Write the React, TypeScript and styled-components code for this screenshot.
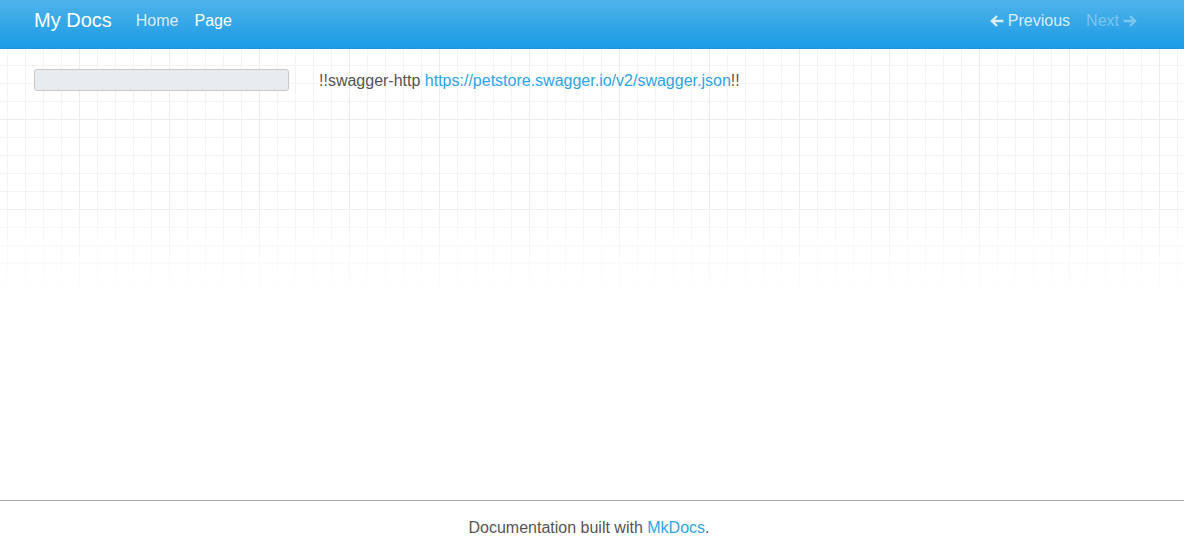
import React from 'react'
import styled, { createGlobalStyle } from 'styled-components'

const GlobalStyle = createGlobalStyle`
  html, body {
    margin: 0;
    padding: 0;
    background: #fff;
  }
  body {
    font-family: "Liberation Sans", Arial, Helvetica, sans-serif;
    font-size: 16px;
    color: #555;
  }
  a {
    color: #2fa4e7;
    text-decoration: none;
  }
`

const Page = styled.div`
  position: relative;
  min-height: 553px;
  display: flex;
  flex-direction: column;
  background-image:
    linear-gradient(to bottom, rgba(255, 255, 255, 0) 0px, rgba(255, 255, 255, 0) 190px, #fff 300px),
    linear-gradient(to right, #ececec 1px, transparent 1px),
    linear-gradient(to bottom, #ececec 1px, transparent 1px),
    linear-gradient(to right, #f3f3f3 1px, transparent 1px),
    linear-gradient(to bottom, #f3f3f3 1px, transparent 1px);
  background-size: 100% 100%, 90px 90px, 90px 90px, 18px 18px, 18px 18px;
  background-position: 0 0, 79px 29px, 79px 29px, 7px 11px, 7px 11px;
  background-repeat: no-repeat, repeat, repeat, repeat, repeat;
`

const Navbar = styled.nav`
  height: 49px;
  box-sizing: border-box;
  display: flex;
  align-items: center;
  padding: 0 47px 7px 34px;
  background: linear-gradient(#4fb3ea, #2fa4e7 60%, #1d9ce5);
  border-bottom: 1px solid #1b95dc;
`

const Brand = styled.a`
  color: #fff;
  font-size: 20px;
  margin-right: 24px;
`

const NavLink = styled.a<{ $active?: boolean; $disabled?: boolean }>`
  display: flex;
  align-items: center;
  gap: 4px;
  font-size: 16px;
  margin-right: 16px;
  color: ${(p) => (p.$disabled ? 'rgba(255,255,255,0.35)' : p.$active ? '#fff' : 'rgba(255,255,255,0.82)')};
  &:last-child {
    margin-right: 0;
  }
`

const Arrow = styled.svg`
  width: 14px;
  height: 14px;
  fill: currentColor;
`

const NavGroup = styled.div`
  display: flex;
  align-items: center;
`

const Spacer = styled.div`
  flex: 1;
`

const Main = styled.div`
  flex: 1;
  display: grid;
  grid-template-columns: 255px 1fr;
  gap: 30px;
  padding: 20px 34px 0;
  align-items: start;
`

const Toc = styled.div`
  height: 20px;
  background: #e9ecef;
  border: 1px solid #c8c8c8;
  border-radius: 3px;
`

const Content = styled.div`
  line-height: 22px;
  padding-top: 1px;
  color: #555;
`

const Footer = styled.footer`
  border-top: 1px solid #aaa;
  height: 53px;
  box-sizing: border-box;
  padding: 2px 6px 0 0;
  display: flex;
  align-items: center;
  justify-content: center;
  color: #555;
`

const LeftArrow = () => (
  <Arrow viewBox="0 0 14 14">
    <path d="M6.2 1.2 L7.8 2.8 L4.9 5.7 H13.4 V8.3 H4.9 L7.8 11.2 L6.2 12.8 L0.2 7 Z" />
  </Arrow>
)

const RightArrow = () => (
  <Arrow viewBox="0 0 14 14">
    <path d="M7.8 1.2 L6.2 2.8 L9.1 5.7 H0.6 V8.3 H9.1 L6.2 11.2 L7.8 12.8 L13.8 7 Z" />
  </Arrow>
)

export default function App() {
  return (
    <>
      <GlobalStyle />
      <Page>
        <Navbar>
          <Brand href="#">My Docs</Brand>
          <NavGroup>
            <NavLink href="#">Home</NavLink>
            <NavLink href="#" $active>
              Page
            </NavLink>
          </NavGroup>
          <Spacer />
          <NavGroup>
            <NavLink href="#">
              <LeftArrow />
              Previous
            </NavLink>
            <NavLink $disabled>
              Next
              <RightArrow />
            </NavLink>
          </NavGroup>
        </Navbar>
        <Main>
          <Toc />
          <Content>
            !!swagger-http <a href="#">https://petstore.swagger.io/v2/swagger.json</a>!!
          </Content>
        </Main>
        <Footer>
          <span>
            Documentation built with <a href="#">MkDocs</a>.
          </span>
        </Footer>
      </Page>
    </>
  )
}
